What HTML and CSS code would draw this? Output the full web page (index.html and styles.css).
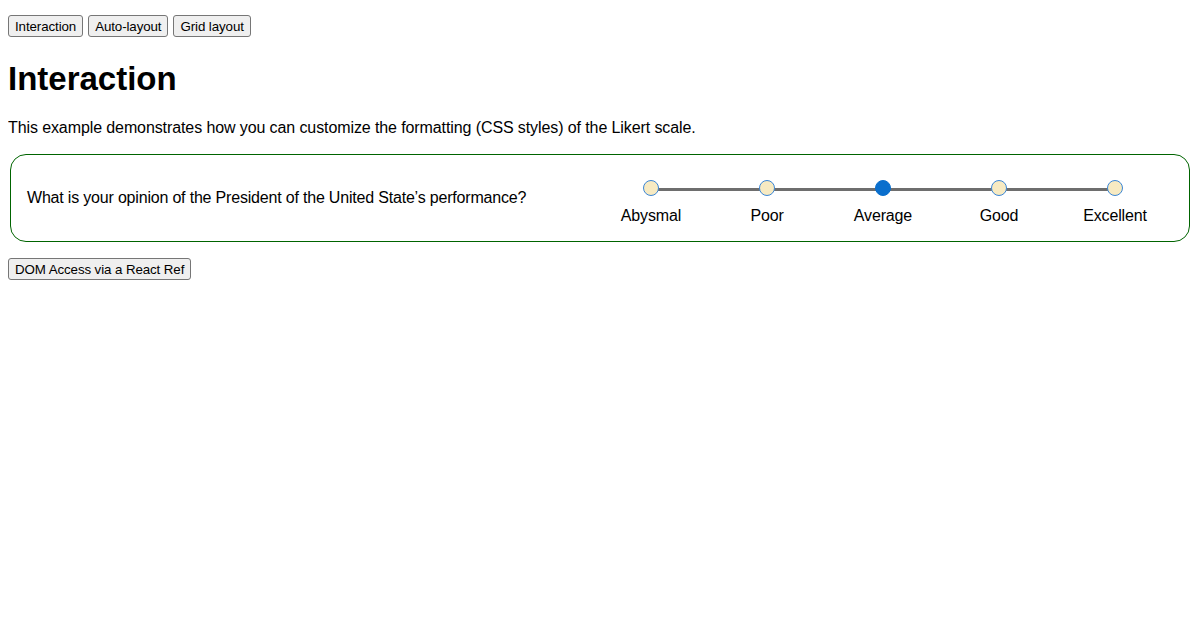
FILE: index.html
```html
<!DOCTYPE html>
<html>
<head>
<meta charset="utf-8">
<link rel="stylesheet" href="styles.css">
</head>
<body>
<nav class="tabs">
  <button class="btn">Interaction</button>
  <button class="btn">Auto-layout</button>
  <button class="btn">Grid layout</button>
</nav>
<h1 class="title">Interaction</h1>
<p class="intro">This example demonstrates how you can customize the formatting (CSS styles) of the Likert scale.</p>
<fieldset class="likert">
  <div class="question">What is your opinion of the President of the United State’s performance?</div>
  <ul class="scale">
    <li class="item first"><span class="track"><span class="dot"></span></span><span class="label">Abysmal</span></li>
    <li class="item"><span class="track"><span class="dot"></span></span><span class="label">Poor</span></li>
    <li class="item"><span class="track"><span class="dot selected"></span></span><span class="label">Average</span></li>
    <li class="item"><span class="track"><span class="dot"></span></span><span class="label">Good</span></li>
    <li class="item last"><span class="track"><span class="dot"></span></span><span class="label">Excellent</span></li>
  </ul>
</fieldset>
<div class="footer">
  <button class="btn">DOM Access via a React Ref</button>
</div>
</body>
</html>
```

FILE: styles.css
```css
body {
  margin: 8px;
  font-family: "Liberation Sans", Arial, sans-serif;
  font-size: 16px;
  color: #000;
  background: #fff;
}
.tabs {
  display: flex;
  gap: 5px;
  padding-top: 7px;
}
.btn {
  font-family: "Liberation Sans", Arial, sans-serif;
  font-size: 13.33px;
  height: 22px;
  padding: 1px 6px;
  border: 1px solid #767676;
  border-radius: 3px;
  background: #efefef;
  color: #000;
  letter-spacing: -0.1px;
}
.title {
  font-size: 33px;
  line-height: 38px;
  font-weight: bold;
  margin: 23px 0 0;
}
.intro {
  margin: 21px 0 17px;
  line-height: 18px;
  letter-spacing: -0.1px;
}
.likert {
  margin: 0 2px 16px;
  padding: 16px;
  border: 1px solid #006400;
  border-radius: 16px;
  display: flex;
  align-items: center;
  min-width: 0;
}
.question {
  flex: 1;
  letter-spacing: -0.19px;
}
.scale {
  list-style: none;
  margin: 0;
  padding: 0;
  display: flex;
}
.item {
  width: 116px;
  display: flex;
  flex-direction: column;
  align-items: center;
}
.track {
  align-self: stretch;
  height: 16px;
  margin-top: 9px;
  display: flex;
  justify-content: center;
  background: linear-gradient(#6e6e6e, #6e6e6e) no-repeat center 8px / 100% 3px;
}
.first .track {
  background-position: right 8px;
  background-size: 50% 3px;
}
.last .track {
  background-position: left 8px;
  background-size: 50% 3px;
}
.dot {
  width: 14px;
  height: 14px;
  border: 1px solid #3b86d6;
  border-radius: 50%;
  background: #f7eac2;
}
.dot.selected {
  background: #0a6fcd;
  border-color: #0a6fcd;
}
.label {
  margin-top: 11px;
  line-height: 18px;
  letter-spacing: -0.15px;
}
.footer {
  display: flex;
}
```
